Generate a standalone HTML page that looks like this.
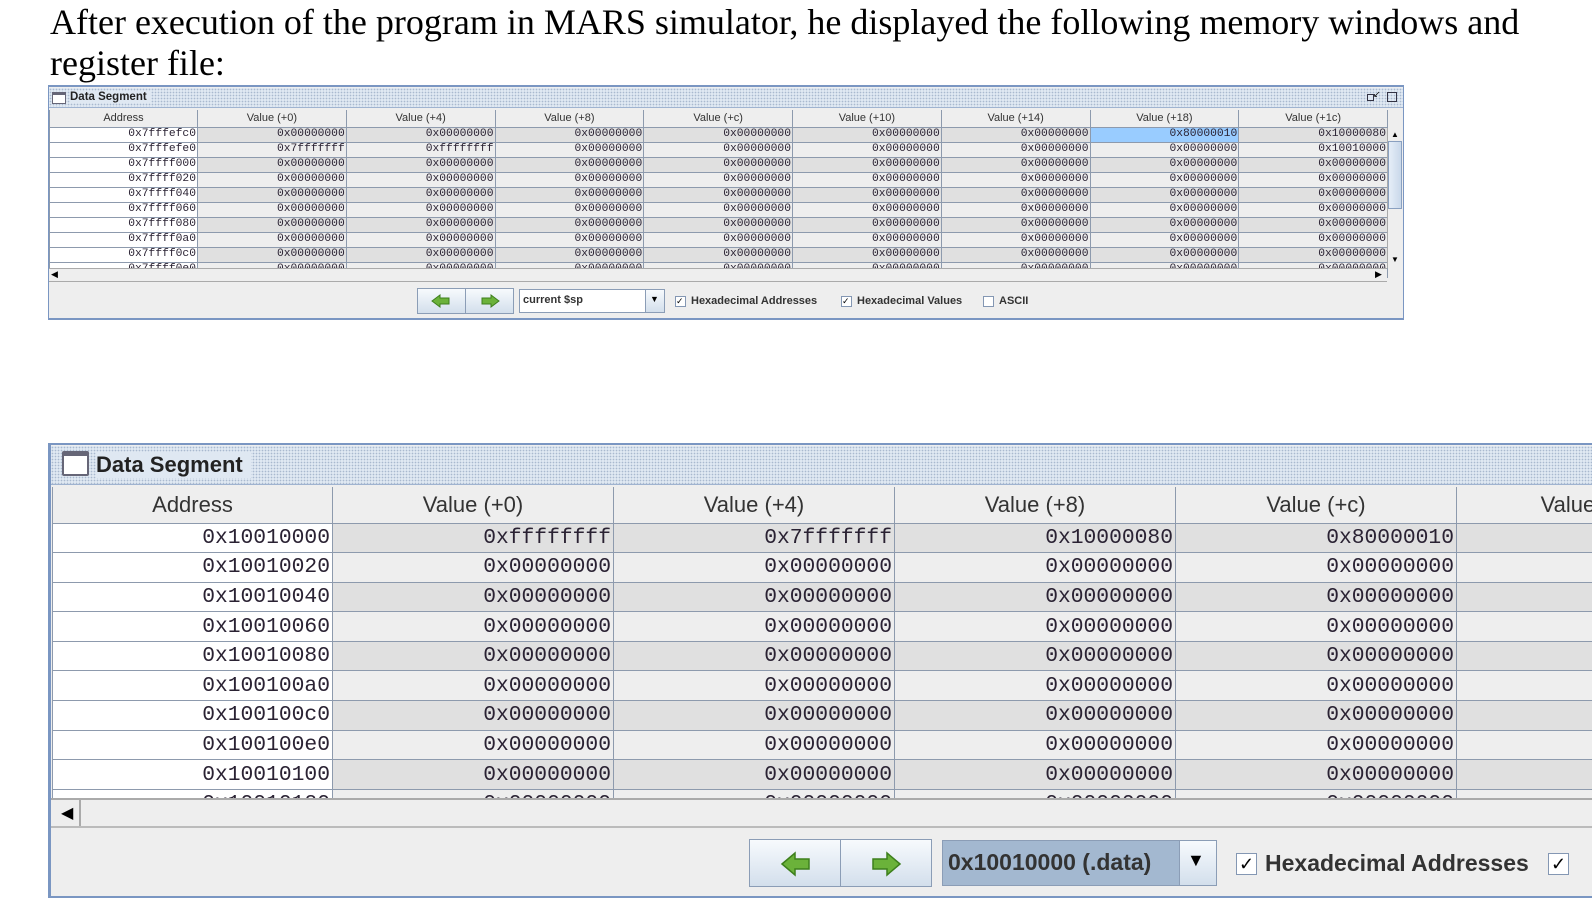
<!DOCTYPE html>
<html style="overflow:hidden;width:1592px;height:912px"><head><meta charset="utf-8"><style>
*{margin:0;padding:0;box-sizing:border-box}
body{width:1592px;height:912px;background:#fff;position:relative;overflow:hidden;font-family:"Liberation Sans",sans-serif}
.h{position:absolute;left:50px;top:2px;font-family:"Liberation Serif",serif;font-size:36px;line-height:41px;color:#000;white-space:nowrap}
.win{position:absolute;background:#eeeeee;border:1px solid #7a96c2;overflow:hidden}
.tb{position:absolute;left:0;right:0;background-color:#dfe8f2;background-image:radial-gradient(#a9b9cf 0.7px,transparent 0.9px);background-size:3px 3px;border-bottom:1px solid #9fb3d0}
.tt{position:absolute;background:#dfe8f2;font-weight:bold;color:#222;white-space:nowrap}
table{position:absolute;border-collapse:collapse;table-layout:fixed}
td,th{border:1px solid #8d9aad;white-space:nowrap;overflow:hidden}
th{background:#eeeeee;font-weight:normal;color:#333;text-align:center;border-top:none}
td{font-family:"Liberation Mono",monospace;text-align:right;color:#2a2233}
tr.g td{background:#e0e0e0}
tr td.a{background:#fff}
td.sel{background:#99ccff !important}
.sm th{font-size:11px;height:17px}
.sm td{font-size:11.3px;height:15px;padding-right:1px;line-height:13px}
.bg th{font-size:22px;height:36px}
.bg td{font-size:21.3px;height:29.6px;padding-right:2px}
.btn{position:absolute;background:linear-gradient(#f7fafd,#d3dfec);border:1px solid #8b9db6}
.cb{position:absolute;background:#fff;border:1px solid #8497b3}
.lbl{position:absolute;font-weight:bold;color:#333;white-space:nowrap}
</style></head><body>
<div class="h">After execution of the program in MARS simulator, he displayed the following memory windows and<br>register file:</div>

<!-- top window -->
<div class="win" style="left:48px;top:85px;width:1356px;height:235px;border-width:2px 1px 2px 1px">
 <div class="tb" style="top:1px;height:20px"></div>
 <div style="position:absolute;left:3px;top:5px;width:14px;height:12px;border:1px solid #667;background:#fff;border-top-width:3px"></div>
 <div class="tt" style="left:21px;top:4px;font-size:11.5px;padding-right:4px">Data Segment</div>
 <div style="position:absolute;left:1318px;top:7px;width:7px;height:7px;border:1px solid #334;background:#dfe8f2"></div>
 <div style="position:absolute;left:1324px;top:2px;font-size:9px;color:#000">&#8601;</div>
 <div style="position:absolute;left:1338px;top:5px;width:10px;height:10px;border:1px solid #334"></div>
 <table class="sm" style="left:0;top:23px;width:1338px">
  <colgroup><col style="width:148px"><col span="8" style="width:148.75px"></colgroup>
  <tr><th>Address</th><th>Value (+0)</th><th>Value (+4)</th><th>Value (+8)</th><th>Value (+c)</th><th>Value (+10)</th><th>Value (+14)</th><th>Value (+18)</th><th>Value (+1c)</th></tr>
  <tr class="g"><td class="a">0x7fffefc0</td><td>0x00000000</td><td>0x00000000</td><td>0x00000000</td><td>0x00000000</td><td>0x00000000</td><td>0x00000000</td><td class="sel">0x80000010</td><td>0x10000080</td></tr>
  <tr><td class="a">0x7fffefe0</td><td>0x7fffffff</td><td>0xffffffff</td><td>0x00000000</td><td>0x00000000</td><td>0x00000000</td><td>0x00000000</td><td>0x00000000</td><td>0x10010000</td></tr>
  <tr class="g"><td class="a">0x7ffff000</td><td>0x00000000</td><td>0x00000000</td><td>0x00000000</td><td>0x00000000</td><td>0x00000000</td><td>0x00000000</td><td>0x00000000</td><td>0x00000000</td></tr>
  <tr><td class="a">0x7ffff020</td><td>0x00000000</td><td>0x00000000</td><td>0x00000000</td><td>0x00000000</td><td>0x00000000</td><td>0x00000000</td><td>0x00000000</td><td>0x00000000</td></tr>
  <tr class="g"><td class="a">0x7ffff040</td><td>0x00000000</td><td>0x00000000</td><td>0x00000000</td><td>0x00000000</td><td>0x00000000</td><td>0x00000000</td><td>0x00000000</td><td>0x00000000</td></tr>
  <tr><td class="a">0x7ffff060</td><td>0x00000000</td><td>0x00000000</td><td>0x00000000</td><td>0x00000000</td><td>0x00000000</td><td>0x00000000</td><td>0x00000000</td><td>0x00000000</td></tr>
  <tr class="g"><td class="a">0x7ffff080</td><td>0x00000000</td><td>0x00000000</td><td>0x00000000</td><td>0x00000000</td><td>0x00000000</td><td>0x00000000</td><td>0x00000000</td><td>0x00000000</td></tr>
  <tr><td class="a">0x7ffff0a0</td><td>0x00000000</td><td>0x00000000</td><td>0x00000000</td><td>0x00000000</td><td>0x00000000</td><td>0x00000000</td><td>0x00000000</td><td>0x00000000</td></tr>
  <tr class="g"><td class="a">0x7ffff0c0</td><td>0x00000000</td><td>0x00000000</td><td>0x00000000</td><td>0x00000000</td><td>0x00000000</td><td>0x00000000</td><td>0x00000000</td><td>0x00000000</td></tr>
  <tr><td class="a">0x7ffff0e0</td><td>0x00000000</td><td>0x00000000</td><td>0x00000000</td><td>0x00000000</td><td>0x00000000</td><td>0x00000000</td><td>0x00000000</td><td>0x00000000</td></tr>
 </table>
 <div style="position:absolute;left:1338px;top:41px;width:17px;height:140px;background:#eee;border-left:1px solid #aaa"></div>
 <div style="position:absolute;left:1339px;top:54px;width:14px;height:68px;background:linear-gradient(90deg,#e6eef8,#c9d8ea);border:1px solid #8aa0c0"></div>
 <div style="position:absolute;left:1342px;top:43px;font-size:8px">&#9650;</div>
 <div style="position:absolute;left:1342px;top:168px;font-size:8px">&#9660;</div>
 <div style="position:absolute;left:0;top:181px;width:1338px;height:14px;background:#eee;border-top:1px solid #aaa;border-bottom:1px solid #aaa"></div>
 <div style="position:absolute;left:2px;top:182px;font-size:9px">&#9664;</div>
 <div style="position:absolute;left:1326px;top:182px;font-size:9px">&#9654;</div>
 <div class="btn" style="left:368px;top:201px;width:49px;height:26px"></div>
 <div class="btn" style="left:416px;top:201px;width:49px;height:26px"></div>
 <svg style="position:absolute;left:382px;top:207px" width="20" height="14"><path d="M1 7 L9 1 V4 H18 V10 H9 V13 Z" fill="#6bb23a" stroke="#3d7f1c"/></svg>
 <svg style="position:absolute;left:431px;top:207px" width="20" height="14"><path d="M19 7 L11 1 V4 H2 V10 H11 V13 Z" fill="#6bb23a" stroke="#3d7f1c"/></svg>
 <div style="position:absolute;left:470px;top:202px;width:146px;height:24px;border:1px solid #8b9db6;background:#fff"></div>
 <div class="lbl" style="left:474px;top:207px;font-size:11px">current $sp</div>
 <div class="btn" style="left:596px;top:202px;width:20px;height:24px"></div>
 <div style="position:absolute;left:601px;top:207px;font-size:9px">&#9660;</div>
 <div class="cb" style="left:626px;top:209px;width:11px;height:11px;font-size:9px;line-height:9px">&#10003;</div>
 <div class="lbl" style="left:642px;top:208px;font-size:11px">Hexadecimal Addresses</div>
 <div class="cb" style="left:792px;top:209px;width:11px;height:11px;font-size:9px;line-height:9px">&#10003;</div>
 <div class="lbl" style="left:808px;top:208px;font-size:11px">Hexadecimal Values</div>
 <div class="cb" style="left:934px;top:209px;width:11px;height:11px"></div>
 <div class="lbl" style="left:950px;top:208px;font-size:11px">ASCII</div>
</div>

<!-- bottom window -->
<div class="win" style="left:48px;top:443px;width:1544px;height:455px;border-width:2px 0 2px 3px">
 <div class="tb" style="top:1px;height:39px"></div>
 <div style="position:absolute;left:11px;top:6px;width:27px;height:25px;border:2px solid #667;border-top-width:5px;border-radius:2px;background:#fff"></div>
 <div class="tt" style="left:45px;top:7px;font-size:22px;padding-right:8px">Data Segment</div>
 <table class="bg" style="left:1px;top:42px;width:1685px">
  <colgroup><col style="width:280px"><col span="5" style="width:281px"></colgroup>
  <tr><th>Address</th><th>Value (+0)</th><th>Value (+4)</th><th>Value (+8)</th><th>Value (+c)</th><th>Value (+10)</th></tr>
  <tr class="g"><td class="a">0x10010000</td><td>0xffffffff</td><td>0x7fffffff</td><td>0x10000080</td><td>0x80000010</td><td>0x00000000</td></tr>
  <tr><td class="a">0x10010020</td><td>0x00000000</td><td>0x00000000</td><td>0x00000000</td><td>0x00000000</td><td>0x00000000</td></tr>
  <tr class="g"><td class="a">0x10010040</td><td>0x00000000</td><td>0x00000000</td><td>0x00000000</td><td>0x00000000</td><td>0x00000000</td></tr>
  <tr><td class="a">0x10010060</td><td>0x00000000</td><td>0x00000000</td><td>0x00000000</td><td>0x00000000</td><td>0x00000000</td></tr>
  <tr class="g"><td class="a">0x10010080</td><td>0x00000000</td><td>0x00000000</td><td>0x00000000</td><td>0x00000000</td><td>0x00000000</td></tr>
  <tr><td class="a">0x100100a0</td><td>0x00000000</td><td>0x00000000</td><td>0x00000000</td><td>0x00000000</td><td>0x00000000</td></tr>
  <tr class="g"><td class="a">0x100100c0</td><td>0x00000000</td><td>0x00000000</td><td>0x00000000</td><td>0x00000000</td><td>0x00000000</td></tr>
  <tr><td class="a">0x100100e0</td><td>0x00000000</td><td>0x00000000</td><td>0x00000000</td><td>0x00000000</td><td>0x00000000</td></tr>
  <tr class="g"><td class="a">0x10010100</td><td>0x00000000</td><td>0x00000000</td><td>0x00000000</td><td>0x00000000</td><td>0x00000000</td></tr>
  <tr><td class="a">0x10010120</td><td>0x00000000</td><td>0x00000000</td><td>0x00000000</td><td>0x00000000</td><td>0x00000000</td></tr>
 </table>
 <div style="position:absolute;left:0;top:353px;width:1544px;height:30px;background:#eee;border-top:2px solid #aaa;border-bottom:2px solid #bbb"></div>
 <div style="position:absolute;left:1px;top:355px;width:29px;height:26px;border-right:2px solid #aaa"></div>
 <div style="position:absolute;left:10px;top:358px;font-size:16px">&#9664;</div>
 <div class="btn" style="left:698px;top:394px;width:92px;height:48px"></div>
 <div class="btn" style="left:789px;top:394px;width:92px;height:48px"></div>
 <svg style="position:absolute;left:729px;top:406px" width="32" height="26"><path d="M2 13 L15 2 V8 H29 V18 H15 V24 Z" fill="#6bb23a" stroke="#3d7f1c" stroke-width="1.5"/></svg>
 <svg style="position:absolute;left:819px;top:406px" width="32" height="26"><path d="M30 13 L17 2 V8 H3 V18 H17 V24 Z" fill="#6bb23a" stroke="#3d7f1c" stroke-width="1.5"/></svg>
 <div style="position:absolute;left:891px;top:395px;width:275px;height:46px;border:1px solid #8b9db6;background:#a3b8d0"></div>
 <div class="lbl" style="left:897px;top:404px;font-size:23px">0x10010000 (.data)</div>
 <div class="btn" style="left:1128px;top:395px;width:38px;height:46px"></div>
 <div style="position:absolute;left:1136px;top:405px;font-size:18px">&#9660;</div>
 <div class="cb" style="left:1185px;top:408px;width:21px;height:22px;font-size:18px;line-height:20px;text-align:center">&#10003;</div>
 <div class="lbl" style="left:1214px;top:405px;font-size:23px">Hexadecimal Addresses</div>
 <div class="cb" style="left:1497px;top:408px;width:21px;height:22px;font-size:18px;line-height:20px;text-align:center">&#10003;</div>
</div>
</body></html>
